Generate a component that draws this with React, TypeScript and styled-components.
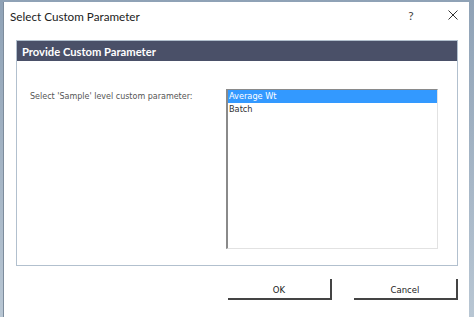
import React from "react";
import styled, { createGlobalStyle } from "styled-components";

const Global = createGlobalStyle`
  * { box-sizing: border-box; }
  html, body { margin: 0; padding: 0; }
  body {
    width: 474px;
    height: 317px;
    overflow: hidden;
    background: #9aaabb;
    font-family: "DejaVu Sans", Verdana, sans-serif;
  }
`;

const Screen = styled.div`
  width: 474px;
  height: 317px;
  padding: 2px 5px 0 3px;
  background: linear-gradient(#8fa2b6, #b8c6d3);
`;

const Window = styled.div`
  width: 466px;
  height: 315px;
  background: #ffffff;
  border-left: 1px solid #7d8c9c;
  display: flex;
  flex-direction: column;
`;

const TitleBar = styled.div`
  height: 26px;
  display: flex;
  align-items: center;
  padding-left: 6px;
  flex-shrink: 0;
`;

const Title = styled.div`
  flex: 1 1 auto;
  font-family: Lato, "Noto Sans", sans-serif;
  font-size: 11.7px;
  color: #222;
  padding-top: 1px;
`;

const TitleButton = styled.div<{ $w: number }>`
  flex: 0 0 ${(p) => p.$w}px;
  width: ${(p) => p.$w}px;
  height: 26px;
  display: flex;
  align-items: center;
  justify-content: center;
  font-family: Lato, "Noto Sans", sans-serif;
  font-size: 12px;
  color: #444;
`;

const Panel = styled.div`
  margin: 12px 0 0 12px;
  width: 442px;
  height: 226px;
  border: 1px solid #b2c0ce;
  display: flex;
  flex-direction: column;
`;

const PanelHeader = styled.div`
  height: 20px;
  background: #4a5068;
  color: #ffffff;
  font-family: Lato, "Noto Sans", sans-serif;
  font-weight: 700;
  font-size: 11.2px;
  display: flex;
  align-items: center;
  padding-left: 5px;
`;

const PanelBody = styled.div`
  flex: 1;
  display: flex;
  padding: 28px 0 0 13px;
`;

const Label = styled.div`
  width: 196px;
  font-size: 8px;
  color: #555;
  padding-top: 3px;
`;

const ListBox = styled.div`
  width: 212px;
  height: 160px;
  border-top: 1px solid #8a8a8a;
  border-left: 2px solid #8a8a8a;
  border-right: 1px solid #e2e2e2;
  border-bottom: 1px solid #e2e2e2;
  display: flex;
  flex-direction: column;
`;

const ListItem = styled.div<{ $selected?: boolean }>`
  height: 13px;
  line-height: 13px;
  font-size: 8.2px;
  padding-left: 1px;
  color: ${(p) => (p.$selected ? "#ffffff" : "#333")};
  background: ${(p) => (p.$selected ? "#3399ff" : "transparent")};
`;

const ButtonRow = styled.div`
  display: flex;
  gap: 22px;
  padding: 13px 0 0 224px;
`;

const Button = styled.div`
  width: 104px;
  height: 21px;
  border-right: 2px solid #444;
  border-bottom: 2px solid #444;
  display: flex;
  align-items: center;
  justify-content: center;
  font-size: 8.5px;
  color: #222;
  padding-top: 2px;
`;

export default function App() {
  return (
    <>
      <Global />
      <Screen>
        <Window>
          <TitleBar>
            <Title>Select Custom Parameter</Title>
            <TitleButton $w={52}>?</TitleButton>
            <TitleButton $w={32}>
              <svg width="10" height="10" viewBox="0 0 10 10">
                <path d="M0.5 0.5 L9.5 9.5 M9.5 0.5 L0.5 9.5" stroke="#333" strokeWidth="1" />
              </svg>
            </TitleButton>
          </TitleBar>
          <Panel>
            <PanelHeader>Provide Custom Parameter</PanelHeader>
            <PanelBody>
              <Label>Select 'Sample' level custom parameter:</Label>
              <ListBox>
                <ListItem $selected>Average Wt</ListItem>
                <ListItem>Batch</ListItem>
              </ListBox>
            </PanelBody>
          </Panel>
          <ButtonRow>
            <Button>OK</Button>
            <Button>Cancel</Button>
          </ButtonRow>
        </Window>
      </Screen>
    </>
  );
}
